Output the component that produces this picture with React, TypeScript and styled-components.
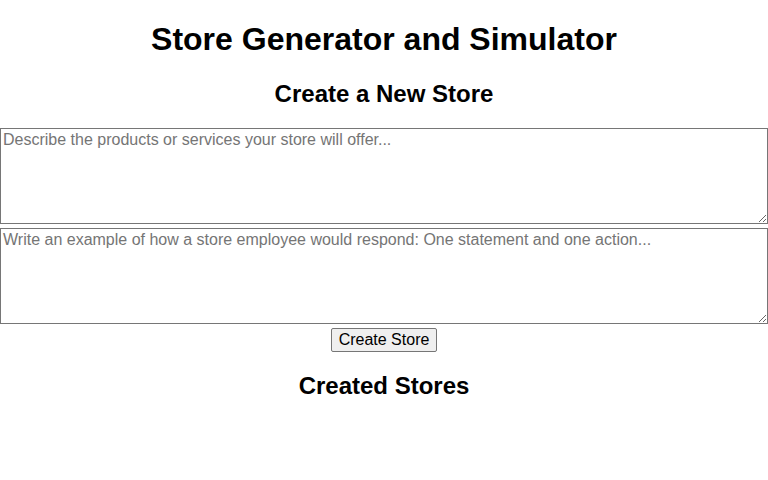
import * as React from 'react';
import styled, { createGlobalStyle } from 'styled-components';

const GlobalStyle = createGlobalStyle`
    body {
        margin: 0;
        background: #ffffff;
        color: #000000;
        font-family: "Liberation Sans", Arial, sans-serif;
    }
`;

const Page = styled.div`
    text-align: center;
`;

const Title = styled.h1`
    font-size: 32px;
    font-weight: bold;
    margin: 21.44px 0;
`;

const SectionTitle = styled.h2`
    font-size: 24px;
    font-weight: bold;
    margin: 19.92px 0;
`;

const Form = styled.div`
    display: flex;
    flex-direction: column;
    align-items: center;
    gap: 4px;
`;

const TextArea = styled.textarea`
    display: block;
    box-sizing: border-box;
    width: 100%;
    height: 96px;
    margin: 0;
    padding: 2px;
    border: 1px solid #767676;
    font-family: "Liberation Sans", Arial, sans-serif;
    font-size: 16px;
    color: #000;
    background: #fff;

    &::placeholder {
        color: #757575;
    }
`;

const Button = styled.button`
    height: 24px;
    padding: 1px 7px;
    font-family: "Liberation Sans", Arial, sans-serif;
    font-size: 16px;
    color: #000;
    background: #efefef;
    border: 1px solid #767676;
    border-radius: 2px;
`;

export default function App(): React.ReactElement {
    return (
        <Page>
            <GlobalStyle />
            <Title>Store Generator and Simulator</Title>
            <SectionTitle>Create a New Store</SectionTitle>
            <Form>
                <TextArea placeholder={'Describe the products or services your store will offer...'} />
                <TextArea placeholder={'Write an example of how a store employee would respond: One statement and one action...'} />
                <Button>Create Store</Button>
            </Form>
            <SectionTitle>Created Stores</SectionTitle>
        </Page>
    );
}
